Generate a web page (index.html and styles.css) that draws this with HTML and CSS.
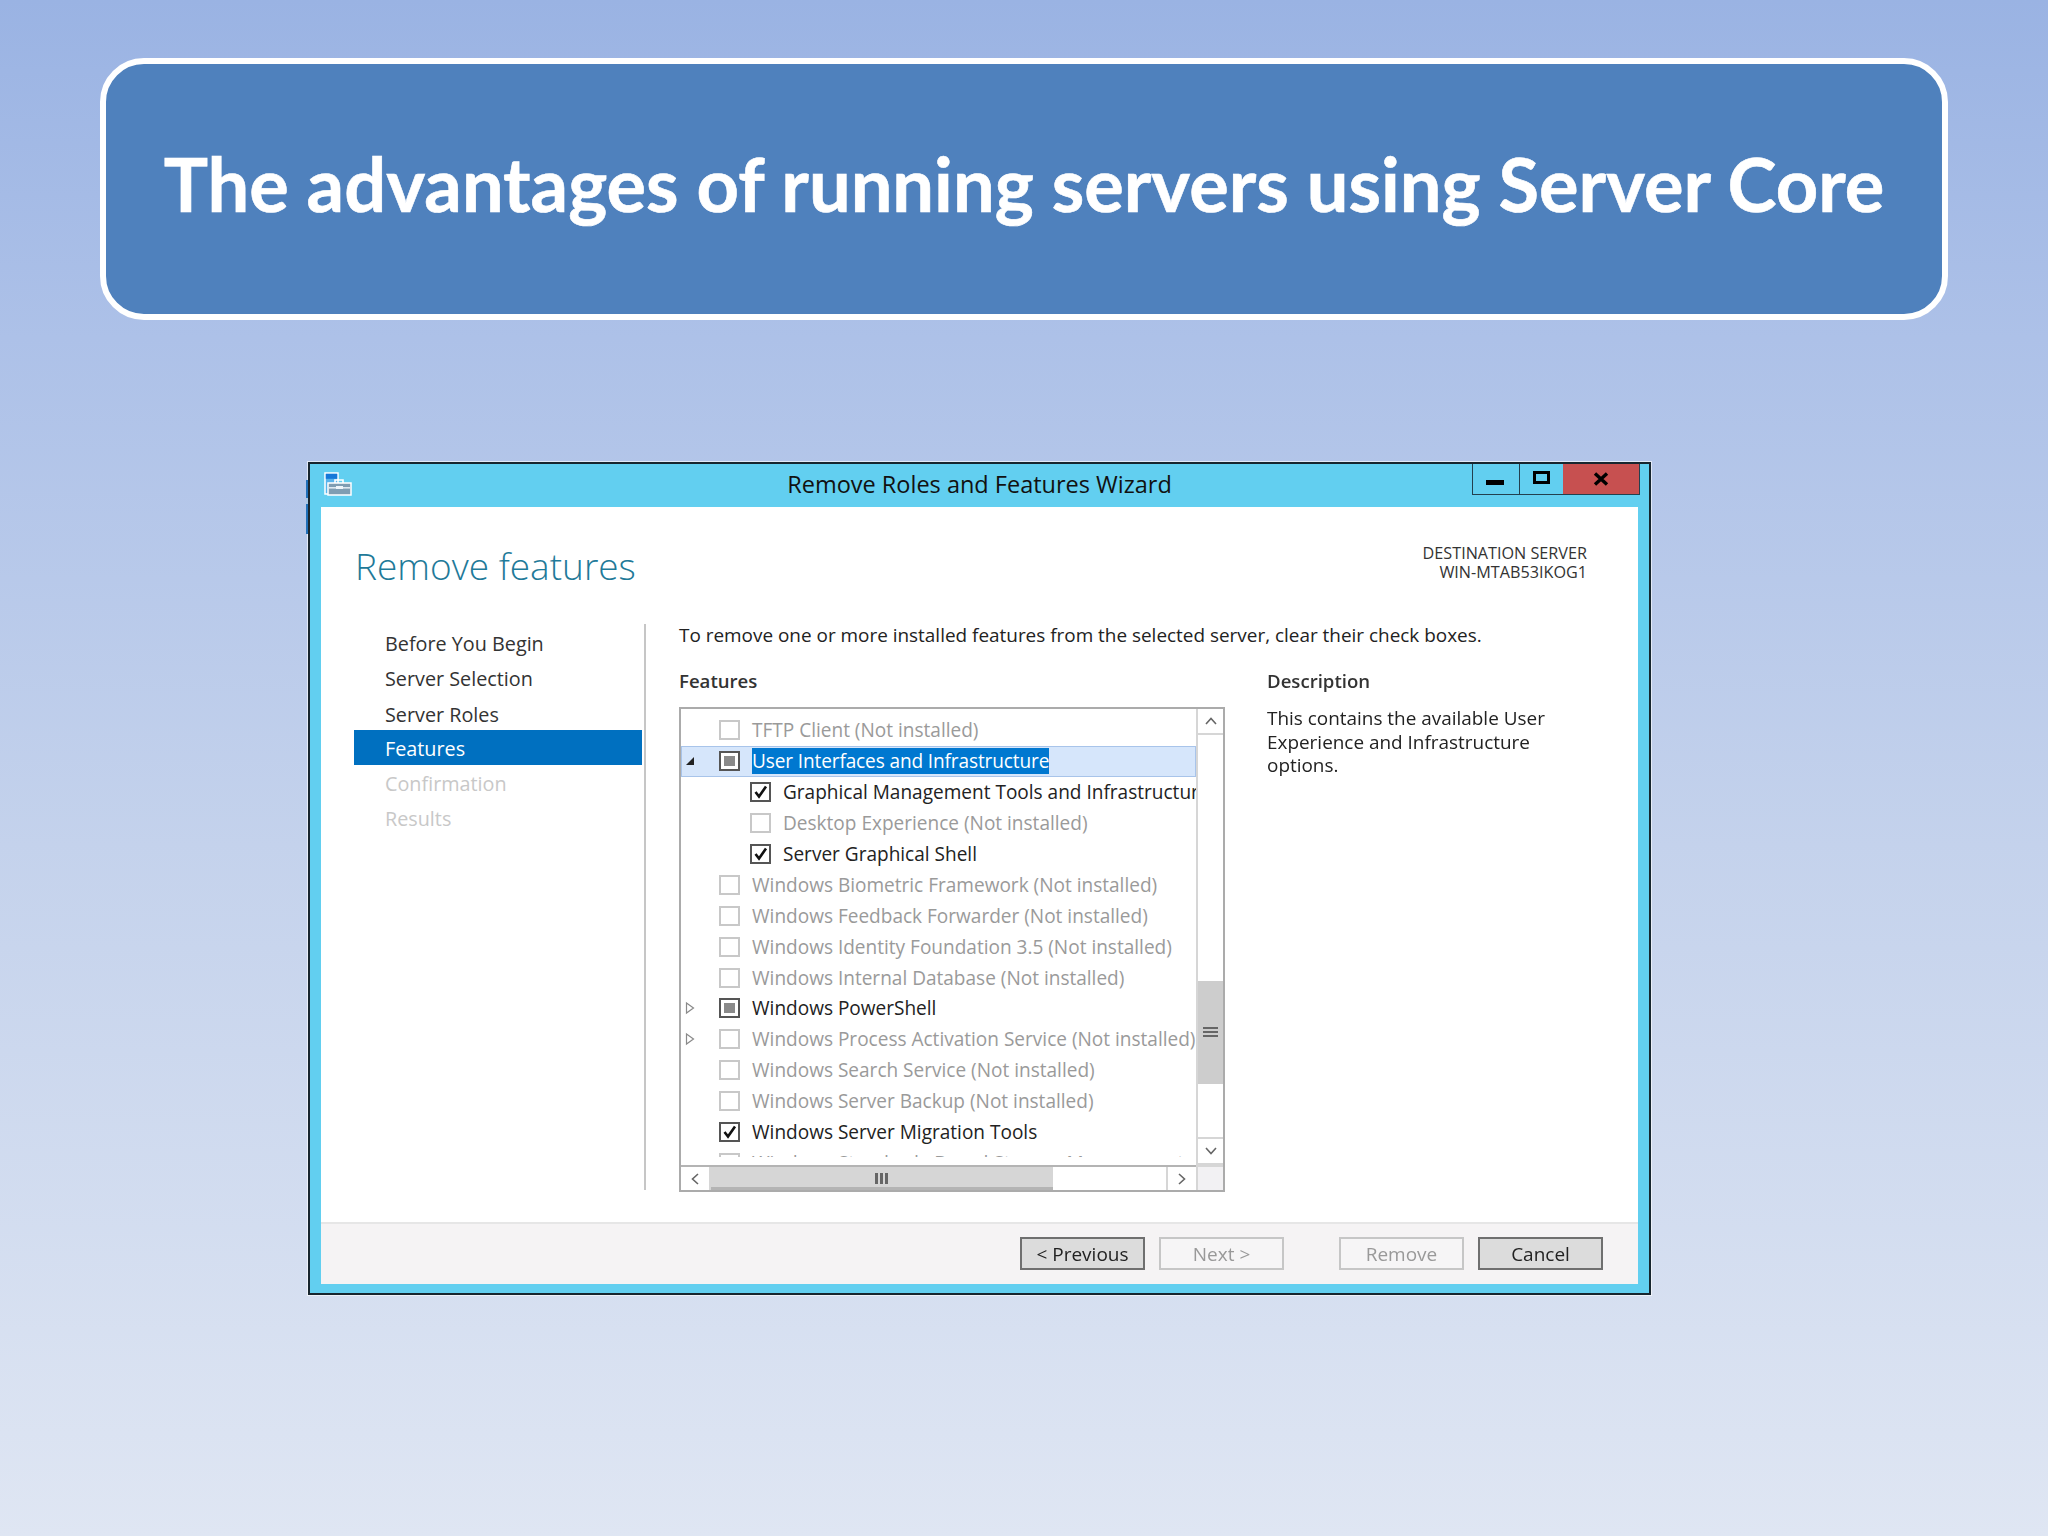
FILE: index.html
```html
<!DOCTYPE html>
<html lang="en">
<head>
  <meta charset="UTF-8">
  <title>The advantages of running servers using Server Core</title>
  <link rel="stylesheet" href="styles.css">
</head>
<body>
  <div class="title-box">
    <h1>The advantages of running servers using Server Core</h1>
  </div>

  <div class="window">
    <div class="titlebar">
      <svg class="app-icon" width="28" height="24" viewBox="0 0 28 24">
        <rect x="1" y="1" width="13" height="21" fill="#58b4ec" stroke="#fff" stroke-width="1.5"/>
        <rect x="1.8" y="1.8" width="11.4" height="5" fill="#1578d8"/>
        <path d="M11 11V8h8v3" fill="none" stroke="#fff" stroke-width="1.6"/>
        <rect x="4" y="11" width="23" height="12" fill="#7f9db2" stroke="#fff" stroke-width="1.5"/>
        <rect x="5" y="15" width="21" height="1.6" fill="#dfeaf2"/>
        <rect x="12" y="14" width="7" height="3" fill="#eef5fa"/>
      </svg>
      <div class="window-title">Remove Roles and Features Wizard</div>
      <div class="controls">
        <div class="ctl ctl-min"><span class="min-glyph"></span></div>
        <div class="ctl ctl-max"><span class="max-glyph"></span></div>
        <div class="ctl ctl-close">
          <svg width="16" height="14" viewBox="0 0 16 14"><path d="M2 1.5 14 12.5M14 1.5 2 12.5" stroke="#000" stroke-width="3.4" fill="none"/></svg>
        </div>
      </div>
    </div>

    <div class="client">
      <div class="head">
        <h2>Remove features</h2>
        <div class="dest">DESTINATION SERVER<br>WIN-MTAB53IKOG1</div>
      </div>

      <div class="main">
        <div class="steps">
          <div class="step">Before You Begin</div>
          <div class="step">Server Selection</div>
          <div class="step">Server Roles</div>
          <div class="step active">Features</div>
          <div class="step off">Confirmation</div>
          <div class="step off">Results</div>
        </div>

        <div class="pane">
          <p class="intro">To remove one or more installed features from the selected server, clear their check boxes.</p>
          <div class="columns">
            <div class="features">
              <div class="label">Features</div>
              <div class="listbox">
                <div class="tree">
                  <div class="row off"><span class="arrow"></span><span class="box"></span><span class="txt">TFTP Client (Not installed)</span></div>
                  <div class="row hl">
                    <span class="arrow"><svg width="12" height="12" viewBox="0 0 12 12"><path d="M10 2v8H2z" fill="#222"/></svg></span>
                    <span class="box partial"></span><span class="txt sel">User Interfaces and Infrastructure</span>
                  </div>
                  <div class="row child">
                    <span class="box on"><svg width="16" height="14" viewBox="0 0 16 14"><path d="M2.5 7 6 11.5 13 1.5" fill="none" stroke="#111" stroke-width="2.6"/></svg></span>
                    <span class="txt">Graphical Management Tools and Infrastructure</span>
                  </div>
                  <div class="row child off"><span class="box"></span><span class="txt">Desktop Experience (Not installed)</span></div>
                  <div class="row child">
                    <span class="box on"><svg width="16" height="14" viewBox="0 0 16 14"><path d="M2.5 7 6 11.5 13 1.5" fill="none" stroke="#111" stroke-width="2.6"/></svg></span>
                    <span class="txt">Server Graphical Shell</span>
                  </div>
                  <div class="row off"><span class="arrow"></span><span class="box"></span><span class="txt">Windows Biometric Framework (Not installed)</span></div>
                  <div class="row off"><span class="arrow"></span><span class="box"></span><span class="txt">Windows Feedback Forwarder (Not installed)</span></div>
                  <div class="row off"><span class="arrow"></span><span class="box"></span><span class="txt">Windows Identity Foundation 3.5 (Not installed)</span></div>
                  <div class="row off"><span class="arrow"></span><span class="box"></span><span class="txt">Windows Internal Database (Not installed)</span></div>
                  <div class="row">
                    <span class="arrow"><svg width="12" height="14" viewBox="0 0 12 14"><path d="M2.5 2 9.5 7 2.5 12z" fill="#fff" stroke="#8a8a8a" stroke-width="1.2"/></svg></span>
                    <span class="box partial"></span><span class="txt">Windows PowerShell</span>
                  </div>
                  <div class="row off">
                    <span class="arrow"><svg width="12" height="14" viewBox="0 0 12 14"><path d="M2.5 2 9.5 7 2.5 12z" fill="#fff" stroke="#8a8a8a" stroke-width="1.2"/></svg></span>
                    <span class="box"></span><span class="txt">Windows Process Activation Service (Not installed)</span>
                  </div>
                  <div class="row off"><span class="arrow"></span><span class="box"></span><span class="txt">Windows Search Service (Not installed)</span></div>
                  <div class="row off"><span class="arrow"></span><span class="box"></span><span class="txt">Windows Server Backup (Not installed)</span></div>
                  <div class="row">
                    <span class="arrow"></span>
                    <span class="box on"><svg width="16" height="14" viewBox="0 0 16 14"><path d="M2.5 7 6 11.5 13 1.5" fill="none" stroke="#111" stroke-width="2.6"/></svg></span>
                    <span class="txt">Windows Server Migration Tools</span>
                  </div>
                  <div class="row off"><span class="arrow"></span><span class="box"></span><span class="txt">Windows Standards-Based Storage Management</span></div>
                </div>
                <div class="vscroll">
                  <div class="sbtn v-up"><svg width="14" height="10" viewBox="0 0 14 10"><path d="M2 8 7 2.5 12 8" fill="none" stroke="#666" stroke-width="1.6"/></svg></div>
                  <div class="vtrack"><div class="vthumb"></div></div>
                  <div class="sbtn v-down"><svg width="14" height="10" viewBox="0 0 14 10"><path d="M2 2 7 7.5 12 2" fill="none" stroke="#666" stroke-width="1.6"/></svg></div>
                </div>
                <div class="hscroll">
                  <div class="sbtn h-left"><svg width="10" height="14" viewBox="0 0 10 14"><path d="M8 2 2.5 7 8 12" fill="none" stroke="#666" stroke-width="1.6"/></svg></div>
                  <div class="hthumb"></div>
                  <div class="htrack"></div>
                  <div class="sbtn h-right"><svg width="10" height="14" viewBox="0 0 10 14"><path d="M2 2 7.5 7 2 12" fill="none" stroke="#666" stroke-width="1.6"/></svg></div>
                </div>
                <div class="corner"></div>
              </div>
            </div>
            <div class="desc">
              <div class="label">Description</div>
              <p>This contains the available User Experience and Infrastructure options.</p>
            </div>
          </div>
        </div>
      </div>

      <div class="footer">
        <button class="btn">&lt; Previous</button>
        <button class="btn dis">Next &gt;</button>
        <button class="btn dis btn-remove">Remove</button>
        <button class="btn">Cancel</button>
      </div>
    </div>
  </div>
</body>
</html>
```

FILE: styles.css
```css
html, body {
  margin: 0;
  padding: 0;
}
body {
  width: 2048px;
  height: 1536px;
  overflow: hidden;
  box-sizing: border-box;
  padding: 58px 100px 0;
  background: linear-gradient(180deg, #9ab3e3 0%, #adc1e8 22%, #c4d2ec 55%, #dfe6f3 100%);
  font-family: "Open Sans", sans-serif;
}

/* slide title */
.title-box {
  width: 1848px;
  height: 262px;
  box-sizing: border-box;
  background-color: #4f81bd;
  border: 6px solid #fff;
  border-radius: 44px;
  padding-top: 78px;
  text-align: center;
}
.title-box h1 {
  margin: 0;
  font-family: Lato, sans-serif;
  font-weight: 700;
  font-size: 74px;
  line-height: 84px;
  color: #fff;
  -webkit-text-stroke: 0.6px #fff;
}

/* wizard window */
.window {
  position: relative;
  width: 1343px;
  height: 833px;
  box-sizing: border-box;
  margin: 142px 0 0 208px;
  border: 2px solid #17262f;
  outline: 1px solid rgba(255, 255, 255, 0.6);
  background-color: #62cff0;
  padding: 0 11px 9px;
  display: flex;
  flex-direction: column;
  filter: blur(0.45px);
}
/* leftover blue edge of the window behind the screenshot */
.window::before {
  content: "";
  position: absolute;
  left: -4px;
  top: 16px;
  width: 2px;
  height: 54px;
  background: linear-gradient(180deg, #1f6fb8 0 34%, #a9c8e6 34% 44%, #1f6fb8 44% 100%);
}
.titlebar {
  height: 43px;
  display: grid;
  grid-template-columns: 1fr auto 1fr;
  align-items: start;
}
.app-icon {
  margin: 8px 0 0 3px;
}
.window-title {
  font-size: 23.5px;
  line-height: 40px;
  color: #111;
}
.controls {
  justify-self: end;
  display: flex;
  height: 30px;
  border: 1px solid #23404f;
  border-top: 0;
  margin-right: -2px;
}
.ctl {
  display: flex;
  align-items: center;
  justify-content: center;
}
.ctl-min {
  width: 46px;
  border-right: 1px solid #23404f;
}
.ctl-max {
  width: 43px;
}
.ctl-close {
  width: 76px;
  background-color: #c75050;
}
.min-glyph {
  width: 18px;
  height: 5px;
  background-color: #000;
  margin: 6px 2px 0 0;
}
.max-glyph {
  width: 11px;
  height: 7px;
  border: 3px solid #000;
  margin-top: -3px;
}

.client {
  flex: 1;
  background-color: #fff;
  display: flex;
  flex-direction: column;
  min-height: 0;
}
.head {
  height: 117px;
  display: flex;
  justify-content: space-between;
  align-items: flex-start;
  padding: 0 51px 0 34px;
}
.head h2 {
  margin: 34px 0 0;
  font-weight: 300;
  font-size: 37px;
  line-height: 50px;
  color: #1f7a99;
}
.dest {
  margin-top: 37px;
  font-size: 16.2px;
  line-height: 19px;
  text-align: right;
  color: #333;
}

.main {
  flex: 1;
  display: flex;
  min-height: 0;
  padding-left: 33px;
}
.steps {
  width: 288px;
  margin-right: 2px;
  padding-top: 1px;
}
.step {
  height: 35.3px;
  line-height: 37px;
  padding-left: 31px;
  font-size: 19.8px;
  color: #333;
}
.step.active {
  background-color: #0070c0;
  color: #fff;
}
.step:nth-child(4) {
  margin-top: -1px;
}
.step.off {
  color: #c8c8c8;
}

.pane {
  height: 566px;
  border-left: 2px solid #c6c6c6;
  padding-left: 33px;
  flex: 1;
}
.intro {
  margin: 0;
  height: 45px;
  line-height: 22px;
  font-size: 18.93px;
  color: #222;
}
.columns {
  display: flex;
}
.features {
  width: 546px;
}
.label {
  font-weight: 600;
  font-size: 18.6px;
  line-height: 24px;
  color: #333;
  margin-bottom: 14px;
}

.listbox {
  width: 546px;
  height: 485px;
  box-sizing: border-box;
  border: 2px solid #ababab;
  display: grid;
  grid-template-columns: 1fr 27px;
  grid-template-rows: 456px 1fr;
}
.tree {
  height: 448px;
  overflow: hidden;
  padding-top: 6px;
  box-sizing: border-box;
}
.row {
  height: 30.9px;
  display: flex;
  align-items: center;
  white-space: nowrap;
  overflow: hidden;
  font-size: 19.05px;
  color: #222;
}
.row.off {
  color: #9a9a9a;
}
.row.child {
  padding-left: 69px;
}
.row.hl {
  background-color: #d6e6fb;
  box-shadow: inset 0 0 0 1px #a8c4ea;
}
.arrow {
  width: 38px;
  padding-left: 3px;
  box-sizing: border-box;
  display: flex;
  align-items: center;
  flex-shrink: 0;
}
.box {
  width: 21px;
  height: 20px;
  box-sizing: border-box;
  border: 2px solid #c8c8c8;
  background-color: #fff;
  flex-shrink: 0;
  margin-right: 12px;
  display: flex;
  align-items: center;
  justify-content: center;
}
.box.on {
  border-color: #555;
}
.box.partial {
  border-color: #555;
  padding: 3px;
}
.box.partial::before {
  content: "";
  width: 100%;
  height: 100%;
  background-color: #8a8a8a;
}
.sel {
  background-color: #0078d0;
  color: #fff;
  line-height: 26px;
  letter-spacing: -0.12px;
}

.vscroll {
  grid-row: 1;
  grid-column: 2;
  border-left: 2px solid #d6d6d6;
  display: flex;
  flex-direction: column;
}
.sbtn {
  display: flex;
  align-items: center;
  justify-content: center;
  background-color: #fff;
  flex-shrink: 0;
}
.v-up {
  height: 24px;
  border-bottom: 2px solid #d6d6d6;
}
.v-down {
  height: 24px;
  border-top: 2px solid #d6d6d6;
  border-bottom: 2px solid #d6d6d6;
}
.vtrack {
  flex: 1;
}
.vthumb {
  height: 103px;
  margin-top: 246px;
  background-color: #cdcdcd;
  position: relative;
}
.vthumb::after {
  content: "";
  position: absolute;
  left: 5px;
  right: 5px;
  top: 46px;
  height: 11px;
  background: repeating-linear-gradient(180deg, #666 0 2px, #cdcdcd 2px 4px);
}
.hscroll {
  grid-row: 2;
  grid-column: 1;
  display: flex;
  border-top: 2px solid #b4b4b4;
}
.h-left {
  width: 28px;
  border-right: 2px solid #d6d6d6;
}
.h-right {
  width: 28px;
  border-left: 2px solid #d6d6d6;
}
.hthumb {
  width: 342px;
  flex-shrink: 0;
  background: #d6d6d6;
  border-bottom: 3px solid #b4b4b4;
  position: relative;
}
.hthumb::after {
  content: "";
  position: absolute;
  left: 164px;
  top: 6px;
  width: 13px;
  height: 11px;
  background: repeating-linear-gradient(90deg, #666 0 3px, #d6d6d6 3px 5px);
}
.htrack {
  flex: 1;
}
.corner {
  grid-row: 2;
  grid-column: 2;
  background-color: #f2f1f3;
  border-left: 2px solid #d6d6d6;
  border-top: 2px solid #d6d6d6;
}

.desc {
  margin-left: 42px;
  width: 310px;
}
.desc p {
  margin: 0;
  font-size: 18.93px;
  line-height: 23.6px;
  color: #222;
}

.footer {
  height: 62px;
  box-sizing: border-box;
  border-top: 2px solid #e6e6e6;
  background-color: #f5f3f4;
  display: flex;
  justify-content: flex-end;
  align-items: flex-start;
  gap: 14px;
  padding: 13px 35px 0 0;
}
.btn {
  width: 125px;
  height: 33px;
  box-sizing: border-box;
  border: 2px solid #6f6f6f;
  background-color: #dcdcdc;
  font-family: "Open Sans", sans-serif;
  font-size: 19px;
  color: #222;
  padding: 0;
}
.btn.dis {
  border-color: #c6c6c6;
  background-color: #f6f5f6;
  color: #999;
}
.btn-remove {
  margin-left: 41px;
}
```
